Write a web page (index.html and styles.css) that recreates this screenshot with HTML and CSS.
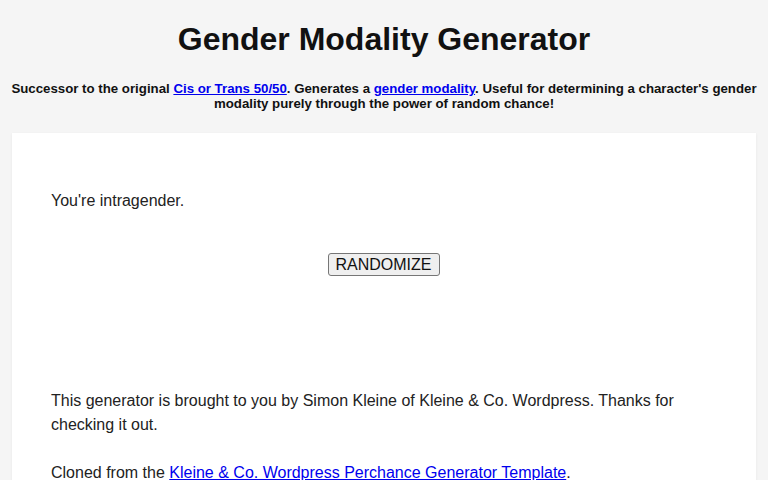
FILE: index.html
```html
<!DOCTYPE html>
<html lang="en">
<head>
<meta charset="utf-8">
<title>Gender Modality Generator</title>
<link rel="stylesheet" href="styles.css">
</head>
<body>
<header class="header">
  <h1 class="title">Gender Modality Generator</h1>
  <p class="subtitle">Successor to the original <a href="#">Cis or Trans 50/50</a>. Generates a <a href="#">gender modality</a>. Useful for determining a character's gender modality purely through the power of random chance!</p>
</header>
<main class="card">
  <p class="result">You're intragender.</p>
  <div class="actions">
    <button class="btn" type="button">RANDOMIZE</button>
  </div>
  <p class="credit">This generator is brought to you by Simon Kleine of Kleine &amp; Co. Wordpress. Thanks for checking it out.</p>
  <p class="credit">Cloned from the <a href="#">Kleine &amp; Co. Wordpress Perchance Generator Template</a>.</p>
</main>
</body>
</html>
```

FILE: styles.css
```css
html, body {
  margin: 0;
  padding: 0;
}
body {
  background: #f5f5f5;
  font-family: "Liberation Sans", Arial, sans-serif;
  color: #222;
  padding: 0 12px;
}
a {
  color: #0000ee;
  text-decoration: underline;
}
.header {
  text-align: center;
}
.title {
  margin: 0;
  padding-top: 21px;
  font-size: 32px;
  line-height: 37px;
  font-weight: bold;
  color: #111;
}
.subtitle {
  margin: 23px -4px 0;
  font-size: 13.25px;
  line-height: 15px;
  font-weight: bold;
  color: #111;
}
.card {
  margin-top: 22px;
  background: #fff;
  padding: 56px 40px 40px 39px;
  box-shadow: 0 1px 3px rgba(0, 0, 0, 0.06);
  font-size: 16px;
  line-height: 24px;
}
.result {
  margin: 0;
}
.actions {
  display: flex;
  justify-content: center;
  margin-top: 40px;
}
.btn {
  font-family: "Liberation Sans", Arial, sans-serif;
  font-size: 16px;
  line-height: 19px;
  color: #111;
  background: #efefef;
  border: 1px solid #767676;
  border-radius: 3px;
  padding: 1px 7px;
  height: 23px;
}
.credit {
  margin: 0 0 24px;
}
.actions + .credit {
  margin-top: 113px;
}
```
